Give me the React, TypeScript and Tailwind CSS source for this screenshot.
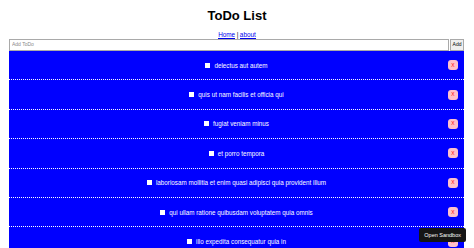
import { useState } from 'react';

interface Todo {
  id: number;
  title: string;
  completed: boolean;
}

const initialTodos: Todo[] = [
  { id: 1, title: 'delectus aut autem', completed: false },
  { id: 2, title: 'quis ut nam facilis et officia qui', completed: false },
  { id: 3, title: 'fugiat veniam minus', completed: false },
  { id: 4, title: 'et porro tempora', completed: false },
  { id: 5, title: 'laboriosam mollitia et enim quasi adipisci quia provident illum', completed: false },
  { id: 6, title: 'qui ullam ratione quibusdam voluptatem quia omnis', completed: false },
  { id: 7, title: 'illo expedita consequatur quia in', completed: false },
];

export default function App() {
  const [todos, setTodos] = useState<Todo[]>(initialTodos);
  const [text, setText] = useState('');

  const addTodo = () => {
    if (!text.trim()) return;
    setTodos([...todos, { id: Date.now(), title: text, completed: false }]);
    setText('');
  };

  const toggle = (id: number) =>
    setTodos(todos.map(t => (t.id === id ? { ...t, completed: !t.completed } : t)));

  const remove = (id: number) => setTodos(todos.filter(t => t.id !== id));

  return (
    <div className="min-h-screen bg-white font-['Liberation_Sans',Arial,sans-serif] text-black">
      <h1 className="pt-[8px] text-center text-[13px] font-bold leading-[16px]">ToDo List</h1>
      <div className="mt-[8px] flex justify-center text-[6.4px] leading-[6px]">
        <a href="#" className="border-b border-[#0000ee] text-[#0000ee]">Home</a>
        <span className="px-[1.5px]">|</span>
        <a href="#" className="border-b border-[#0000ee] text-[#0000ee]">about</a>
      </div>

      <div className="ml-[9px] mr-[10px]">
        <div className="flex h-[12px]">
          <input
            value={text}
            onChange={e => setText(e.target.value)}
            placeholder="Add ToDo"
            className="min-w-0 flex-1 border border-[#a9a9a9] bg-white px-[2px] text-[5px] outline-none placeholder:text-[#8a8a8a]"
          />
          <button
            onClick={addTodo}
            className="ml-[1px] w-[14px] border border-[#a9a9a9] bg-[#efefef] text-[5px] text-black"
          >
            Add
          </button>
        </div>

        <ul className="bg-[#0000ff]">
          {todos.map(todo => (
            <li
              key={todo.id}
              className="relative flex h-[29.4px] items-center justify-center border-b border-dotted border-white"
            >
              <span
                onClick={() => toggle(todo.id)}
                className="mr-[4px] h-[5px] w-[5px] cursor-pointer bg-white"
              />
              <span
                className={`text-[6.3px] leading-[7px] text-white ${todo.completed ? 'line-through' : ''}`}
              >
                {todo.title}
              </span>
              <button
                onClick={() => remove(todo.id)}
                className="absolute right-[6px] top-1/2 flex h-[10px] w-[10px] -translate-y-1/2 items-center justify-center rounded-[3px] bg-[#ffc0cb] text-[5px] leading-none text-[#ff0000]"
              >
                X
              </button>
            </li>
          ))}
        </ul>
      </div>

      <div className="fixed bottom-[6px] right-[8px] rounded-[2px] bg-[#151515] px-[5px] py-[3.5px] text-[5.5px] leading-[7px] text-white">
        Open Sandbox
      </div>
    </div>
  );
}
